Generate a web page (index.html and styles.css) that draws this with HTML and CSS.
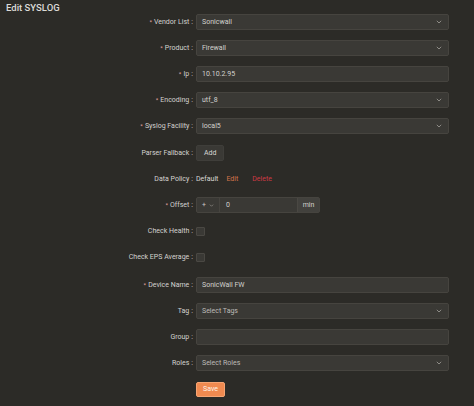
FILE: index.html
```html
<!DOCTYPE html>
<html lang="en">
<head>
<meta charset="utf-8">
<title>Edit SYSLOG</title>
<link rel="stylesheet" href="styles.css">
</head>
<body>
<div class="page">
  <h1 class="title">Edit SYSLOG</h1>
  <form class="form">
    <div class="row">
      <label class="label"><span class="req">*</span>Vendor List</label>
      <div class="field select"><span class="val">Sonicwall</span><svg class="chev" viewBox="0 0 6 4" width="6" height="4"><polyline points="0.8,0.8 3,3 5.2,0.8"/></svg></div>
    </div>
    <div class="row">
      <label class="label"><span class="req">*</span>Product</label>
      <div class="field select"><span class="val">Firewall</span><svg class="chev" viewBox="0 0 6 4" width="6" height="4"><polyline points="0.8,0.8 3,3 5.2,0.8"/></svg></div>
    </div>
    <div class="row">
      <label class="label"><span class="req">*</span>Ip</label>
      <div class="field"><span class="val">10.10.2.95</span></div>
    </div>
    <div class="row">
      <label class="label"><span class="req">*</span>Encoding</label>
      <div class="field select"><span class="val">utf_8</span><svg class="chev" viewBox="0 0 6 4" width="6" height="4"><polyline points="0.8,0.8 3,3 5.2,0.8"/></svg></div>
    </div>
    <div class="row">
      <label class="label"><span class="req">*</span>Syslog Facility</label>
      <div class="field select"><span class="val">local5</span><svg class="chev" viewBox="0 0 6 4" width="6" height="4"><polyline points="0.8,0.8 3,3 5.2,0.8"/></svg></div>
    </div>
    <div class="row gap-extra">
      <label class="label">Parser Fallback</label>
      <div class="ctl"><button type="button" class="btn">Add</button></div>
    </div>
    <div class="row">
      <label class="label">Data Policy</label>
      <div class="ctl policy"><span>Default</span><a class="edit">Edit</a><a class="del">Delete</a></div>
    </div>
    <div class="row">
      <label class="label"><span class="req">*</span>Offset</label>
      <div class="ctl">
        <div class="group">
          <div class="sign"><span>+</span><svg class="chev small" viewBox="0 0 6 4" width="5" height="3"><polyline points="0.8,0.8 3,3 5.2,0.8"/></svg></div>
          <div class="num">0</div>
          <div class="addon">min</div>
        </div>
      </div>
    </div>
    <div class="row">
      <label class="label">Check Health</label>
      <div class="ctl"><span class="check"></span></div>
    </div>
    <div class="row gap-extra2">
      <label class="label">Check EPS Average</label>
      <div class="ctl"><span class="check"></span></div>
    </div>
    <div class="row">
      <label class="label"><span class="req">*</span>Device Name</label>
      <div class="field"><span class="val">SonicWall FW</span></div>
    </div>
    <div class="row">
      <label class="label">Tag</label>
      <div class="field select"><span class="val ph">Select Tags</span><svg class="chev" viewBox="0 0 6 4" width="6" height="4"><polyline points="0.8,0.8 3,3 5.2,0.8"/></svg></div>
    </div>
    <div class="row">
      <label class="label">Group</label>
      <div class="field"><span class="val"></span></div>
    </div>
    <div class="row">
      <label class="label">Roles</label>
      <div class="field select"><span class="val ph">Select Roles</span><svg class="chev" viewBox="0 0 6 4" width="6" height="4"><polyline points="0.8,0.8 3,3 5.2,0.8"/></svg></div>
    </div>
    <div class="row">
      <span class="label blank"></span>
      <div class="ctl"><button type="button" class="btn save">Save</button></div>
    </div>
  </form>
</div>
</body>
</html>
```

FILE: styles.css
```css
html, body {
  margin: 0;
  padding: 0;
  background: #2c2b27;
}
body {
  font-family: Roboto, "Liberation Sans", sans-serif;
  color: #d6d5d2;
  width: 474px;
  height: 406px;
  overflow: hidden;
}
.title {
  margin: 0;
  padding: 1px 0 0 6px;
  height: 13px;
  line-height: 13px;
  font-size: 9.5px;
  font-weight: 500;
  color: #dcdbd8;
}
.form {
  margin: 0;
  display: flex;
  flex-direction: column;
  gap: 10px;
}
.row {
  display: grid;
  grid-template-columns: 196px 253px;
  height: 16px;
  align-items: center;
  font-size: 7px;
}
.gap-extra { margin-top: 1px; }
.gap-extra2 { margin-bottom: 2px; }
.label {
  text-align: right;
  padding-right: 3px;
  color: #d3d2cf;
  white-space: nowrap;
}
.label::after {
  content: ":";
  margin-left: 2px;
}
.label.blank::after { content: ""; }
.req {
  color: #e6a9a4;
  font-size: 6px;
  margin-right: 2px;
}
.field {
  box-sizing: border-box;
  height: 16px;
  background: #3a3935;
  border: 1px solid #46443f;
  border-radius: 2px;
  display: flex;
  align-items: center;
  padding: 0 5px;
}
.val {
  flex: 1;
  color: #d2d1ce;
}
.val.ph { color: #bdbbb7; }
.chev {
  fill: none;
  stroke: #8d8b86;
  stroke-width: 1;
  margin-right: 1px;
}
.chev.small { margin: 0; }
.ctl {
  display: flex;
  align-items: center;
}
.btn {
  box-sizing: border-box;
  height: 16px;
  padding: 0 7px;
  font-family: inherit;
  font-size: 7px;
  color: #d8d7d4;
  background: #3a3935;
  border: 1px solid #3f3e3a;
  border-radius: 2px;
}
.btn.save {
  height: 15px;
  width: 29px;
  padding: 0;
  color: #fff4ea;
  background: #f08a50;
  border-color: #f6a574;
}
.policy span { color: #d8d7d4; }
.policy a { margin-left: 8px; }
.policy .edit { color: #d2744a; }
.policy .del { color: #cc3a44; margin-left: 14px; }
.group {
  box-sizing: border-box;
  display: flex;
  height: 16px;
  width: 124px;
  background: #3a3935;
  border: 1px solid #46443f;
  border-radius: 2px;
}
.sign {
  width: 22px;
  display: flex;
  align-items: center;
  justify-content: center;
  gap: 3px;
  border-right: 1px solid #46443f;
  color: #c8c7c3;
}
.num {
  flex: 1;
  display: flex;
  align-items: center;
  padding-left: 6px;
  color: #d2d1ce;
}
.addon {
  width: 21px;
  display: flex;
  align-items: center;
  justify-content: center;
  background: #42413d;
  border-left: 1px solid #4a4843;
  color: #d2d1ce;
}
.check {
  box-sizing: border-box;
  width: 9px;
  height: 9px;
  background: #3a3935;
  border: 1px solid #4a4843;
  border-radius: 1px;
}
```
